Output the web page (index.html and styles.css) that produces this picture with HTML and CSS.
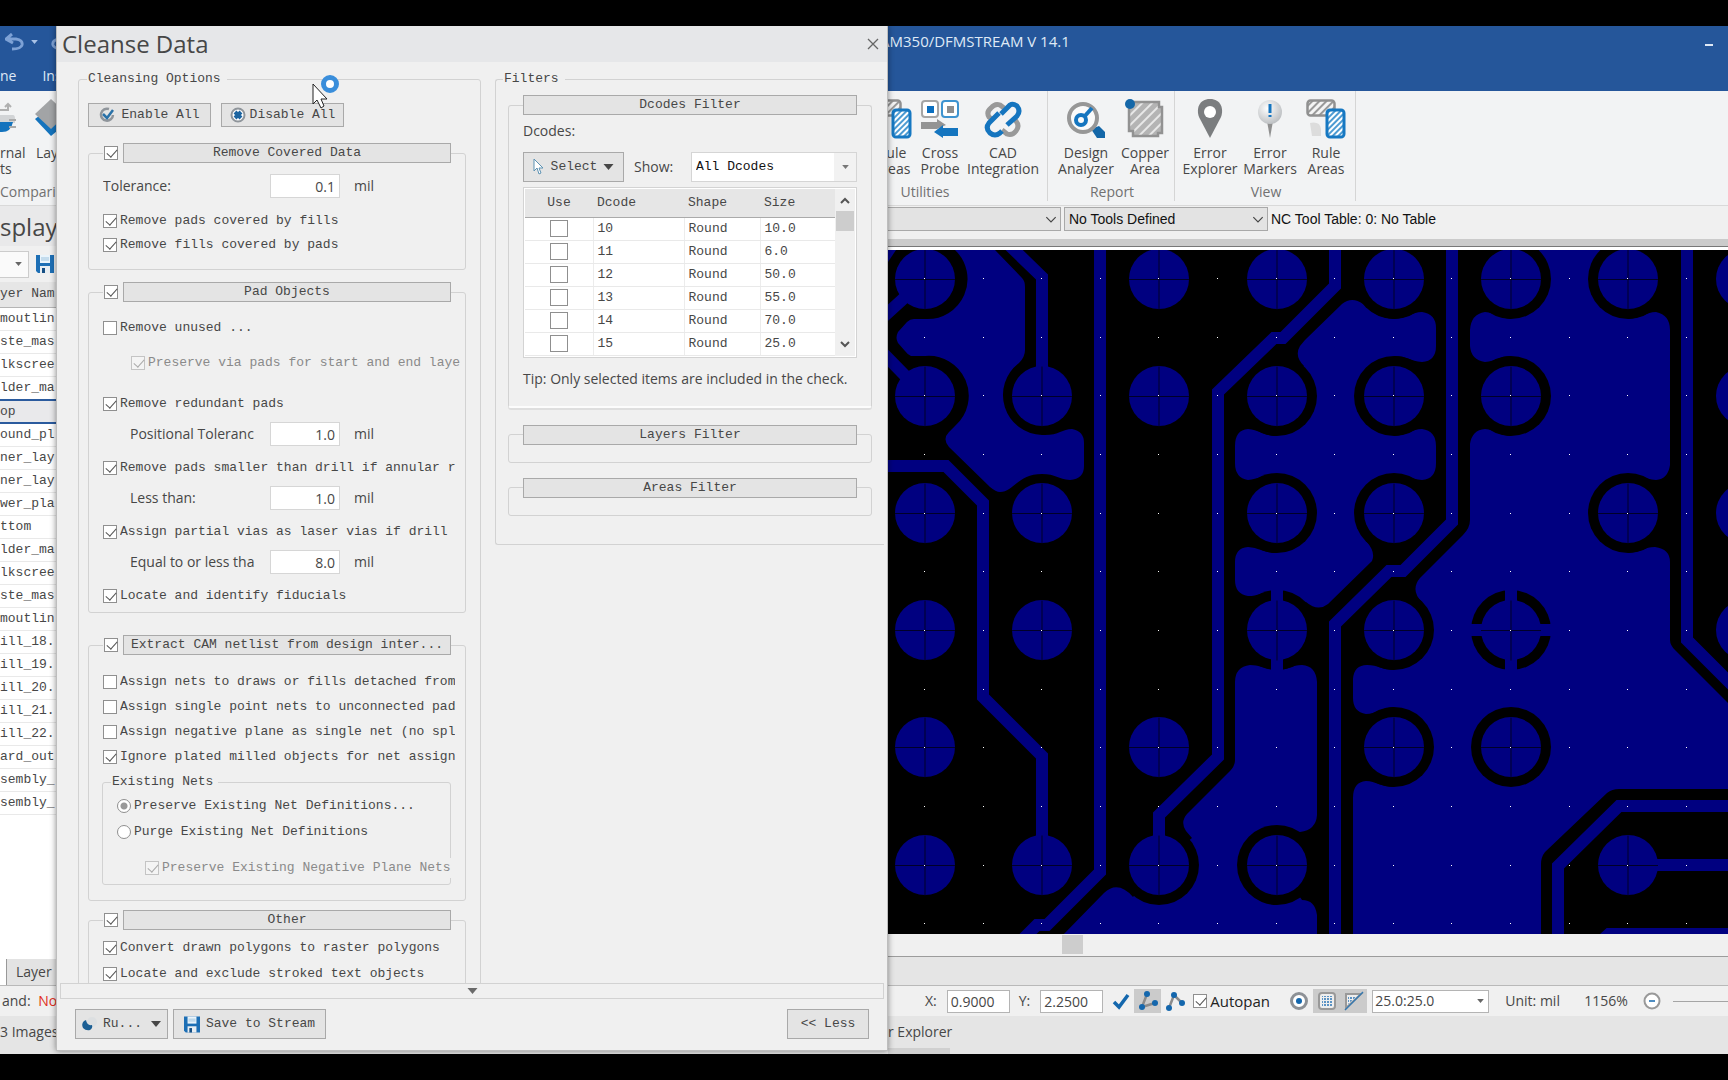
FILE: index.html
```html
<!DOCTYPE html>
<html lang="en">
<head>
<meta charset="utf-8">
<title>CAM350/DFMSTREAM V 14.1</title>
<link rel="stylesheet" href="styles.css">
</head>
<body>
<svg class="defs" aria-hidden="true">
  <defs>
    <pattern id="hatchGray" width="5" height="5" patternUnits="userSpaceOnUse" patternTransform="rotate(45)"><rect width="5" height="5" fill="#f4f4f4"/><rect width="2" height="5" fill="#9a9a9a"/></pattern>
    <pattern id="hatchCopper" width="7" height="7" patternUnits="userSpaceOnUse" patternTransform="rotate(45)"><rect width="7" height="7" fill="#b4b4b4"/><rect width="2" height="7" fill="#e8e8e8"/></pattern>
    <pattern id="hatchBlue" width="4" height="4" patternUnits="userSpaceOnUse" patternTransform="rotate(45)"><rect width="4" height="4" fill="#fff"/><rect width="2" height="4" fill="#4d9bd2"/></pattern>
    <pattern id="dotsBlue" width="3" height="3" patternUnits="userSpaceOnUse"><rect width="2" height="2" fill="#5b93c4"/></pattern>
    <radialGradient id="ball" cx="0.4" cy="0.35" r="0.7"><stop offset="0" stop-color="#fff"/><stop offset="1" stop-color="#b9bcbf"/></radialGradient>
    <symbol id="caret" viewBox="0 0 10 6"><path d="M0 0H10L5 6Z" fill="currentColor"/></symbol>
    <symbol id="chev" viewBox="0 0 10 6"><path d="M1 1L5 5L9 1" fill="none" stroke="currentColor" stroke-width="1"/></symbol>
    <symbol id="disk" viewBox="0 0 18 18"><path d="M0 0H18V18H2L0 16Z" fill="#1d6fb5"/><rect x="4" y="0" width="10" height="8" fill="#eaf4fb"/><path d="M5 3H13M5 5H13" stroke="#9dc3de"/><rect x="4" y="11" width="10" height="7" fill="#e8eef2"/><rect x="6" y="13" width="3" height="5" fill="#174f84"/></symbol>
    <symbol id="rules" viewBox="0 0 40 40"><rect x="1.500" y="1.500" width="27" height="15" rx="3" fill="url(#hatchGray)" stroke="#909090" stroke-width="2.500"/><path d="M4 24Q14 22 15 30V37H6Z" fill="#dcdcdc"/><rect x="21" y="11" width="17" height="27" rx="3" fill="url(#hatchBlue)" stroke="#1678c2" stroke-width="3"/></symbol>
  </defs>
</svg>
<main class="app">
  <header class="titlebar">
    <div class="left-strip">
      <div class="quick">
        <svg width="20" height="18" viewBox="0 0 20 18"><path d="M7 1L1 6L8 10M2 6H11Q18 7 17 12Q16 16 7 16" fill="none" stroke="#7ea2d6" stroke-width="3"/></svg>
        <svg width="7" height="4" class="quick-caret"><use href="#caret"/></svg>
        <svg width="20" height="18" viewBox="0 0 20 18"><path d="M13 1L19 6L12 10M18 6H9Q2 7 3 12Q4 16 13 16" fill="none" stroke="#7ea2d6" stroke-width="3"/></svg>
      </div>
      <nav class="tabs"><a href="#home">ne</a><a href="#insert">Ins</a></nav>
    </div>
    <h1 class="app-title">AM350/DFMSTREAM V 14.1</h1>
    <button class="minimize" aria-label="Minimize"></button>
  </header>

  <section class="ribbon">
    <div class="group compare">
      <div class="tools">
        <button class="tool"><svg width="16" height="40" viewBox="0 0 16 40"><path d="M0 11H8V6M5 8L8 5L11 8" fill="none" stroke="#b0b0b0" stroke-width="2"/><path d="M0 16H13Q15 16 15 20V24H0Z" fill="#d2d4d6"/><path d="M0 23H13Q11 33 2 33H0Z" fill="#1473bd"/><path d="M9 21H16M9 28H16" stroke="#aaa" stroke-width="2"/></svg><span>rnal<br>ts</span></button>
        <button class="tool"><svg width="40" height="40" viewBox="0 0 40 40"><path d="M20 8L38 22L20 37L4 20Z" fill="#1473bd"/><path d="M20 0L36 15L20 30L4 15Z" fill="#a2a4a6"/></svg><span>Laye</span></button>
      </div>
      <div class="caption">Comparis</div>
    </div>
    <div class="group utilities">
      <div class="tools">
        <button class="tool w52"><svg width="40" height="40"><use href="#rules"/></svg><span>Rule<br>Areas</span></button>
        <button class="tool w44"><svg width="40" height="40" viewBox="0 0 40 40"><rect x="2" y="2" width="16" height="16" rx="3" fill="#fff" stroke="#a5a5a5" stroke-width="2"/><rect x="7" y="7" width="7" height="7" fill="#0b6fc0"/><rect x="22" y="2" width="16" height="16" rx="3" fill="#fff" stroke="#3d93d0" stroke-width="2"/><rect x="27" y="7" width="7" height="7" fill="#8e8e8e"/><path d="M1 23H17V20L26 26L17 30H1Z" fill="#949494"/><path d="M38 29H23V26L14 33L23 39V37H38Z" fill="#1575bf"/></svg><span>Cross<br>Probe</span></button>
        <button class="tool w82"><svg width="40" height="40" viewBox="0 0 40 40"><g fill="none" stroke-width="5"><path d="M21 9L17 6Q12 4 8 9Q3 13 6 18L10 21" stroke="#999"/><path d="M19 31L24 35Q29 37 33 32Q37 27 33 22L30 19" stroke="#999"/><path d="M18 15L27 6Q30 4 34 7Q38 12 34 17L24 26" stroke="#1575bf"/><path d="M16 14L6 24Q2 29 7 34Q12 38 17 34L19 32" stroke="#1575bf"/></g></svg><span>CAD<br>Integration</span></button>
      </div>
      <div class="caption">Utilities</div>
    </div>
    <div class="group">
      <div class="tools">
        <button class="tool w66"><svg width="40" height="40" viewBox="0 0 40 40"><path d="M25 30L33 27L39 33V39H31Z" fill="#1467a8"/><circle cx="17" cy="19" r="14" fill="#fafafa" stroke="#979797" stroke-width="4"/><circle cx="15" cy="21" r="5" fill="none" stroke="#1575bf" stroke-width="4"/><path d="M18 18L26 9" stroke="#1575bf" stroke-width="4"/></svg><span>Design<br>Analyzer</span></button>
        <button class="tool w52"><svg width="40" height="40" viewBox="0 0 40 40"><path d="M6 3H34V8H37V34H33V37H8V32H4V8H6Z" fill="url(#hatchCopper)" stroke="#929292" stroke-width="2.500"/><circle cx="5" cy="5" r="5" fill="#1467a8"/></svg><span>Copper<br>Area</span></button>
      </div>
      <div class="caption">Report</div>
    </div>
    <div class="group">
      <div class="tools">
        <button class="tool w60"><svg width="40" height="40" viewBox="0 0 40 40"><path d="M20 0C9 0 6 10 9 18L20 39L31 18C34 10 31 0 20 0Z" fill="#7b7d7f"/><circle cx="20" cy="13" r="6" fill="#fff"/></svg><span>Error<br>Explorer</span></button>
        <button class="tool w60"><svg width="40" height="40" viewBox="0 0 40 40"><path d="M17 22H23L20 39Z" fill="#909090"/><circle cx="20" cy="13" r="12" fill="url(#ball)"/><path d="M20 5V14M20 16V18" stroke="#1575bf" stroke-width="3"/></svg><span>Error<br>Markers</span></button>
        <button class="tool w52"><svg width="40" height="40"><use href="#rules"/></svg><span>Rule<br>Areas</span></button>
      </div>
      <div class="caption">View</div>
    </div>
  </section>

  <section class="workspace">
    <aside class="layers">
      <h2>splay</h2>
      <div class="layer-tools"><span class="combo-end"><svg width="7" height="4"><use href="#caret"/></svg></span><button class="flat" aria-label="Save"><svg width="18" height="20"><use href="#disk"/></svg></button></div>
      <table class="layer-table">
        <thead><tr><th>yer Nam</th></tr></thead>
        <tbody>
          <tr><td>moutlin</td></tr><tr><td>ste_mas</td></tr><tr><td>lkscree</td></tr><tr><td>lder_ma</td></tr>
          <tr class="current"><td>op</td></tr><tr><td>ound_pl</td></tr><tr><td>ner_lay</td></tr><tr><td>ner_lay</td></tr>
          <tr><td>wer_pla</td></tr><tr><td>ttom</td></tr><tr><td>lder_ma</td></tr><tr><td>lkscree</td></tr>
          <tr><td>ste_mas</td></tr><tr><td>moutlin</td></tr><tr><td>ill_18.</td></tr><tr><td>ill_19.</td></tr>
          <tr><td>ill_20.</td></tr><tr><td>ill_21.</td></tr><tr><td>ill_22.</td></tr><tr><td>ard_out</td></tr>
          <tr><td>sembly_</td></tr><tr><td>sembly_</td></tr>
        </tbody>
      </table>
      <div class="panel-tabs"><button>Layer</button></div>
    </aside>
    <div class="view">
      <div class="toolbar">
        <span class="native blank"><select aria-label="Layer"><option></option></select><svg width="12" height="7"><use href="#chev"/></svg></span>
        <span class="native"><select aria-label="Tool"><option>No Tools Defined</option></select><svg width="12" height="7"><use href="#chev"/></svg></span>
        <span class="nc">NC Tool Table: 0: No Table</span>
      </div>
      <div class="band"></div>
      <svg class="board" viewBox="300 250 1428 684" preserveAspectRatio="xMinYMin slice" role="img" aria-label="Board layout">
        <rect x="300" y="250" width="1428" height="684" fill="#000"/>
        <g fill="#000080">
          <path d="M880 250H896L888 262H880Z"/>
          <path d="M955 250H995L1022 278Q1025 281 1025 287V350Q1025 357 1019 363A40 40 0 0 0 1042 435C1058 436 1062 429 1072 429Q1084 431 1084 443V466Q1084 479 1070 480C1058 479 1056 474 1042 474C1018 474 1013 492 1000 492Q996 492 990 487L949 447Q942 439 949 432L955 426A40 40 0 0 0 925 356H911Q908 355 905 351L898 343Q895 338 898 332L907 322Q910 319 914 319H925A40 40 0 0 0 955 250Z"/>
          <path d="M1305 340L1342 304Q1352 296 1363 304C1372 312 1380 318 1394 319C1408 318 1412 312 1422 312Q1436 314 1436 328V346Q1436 361 1422 362C1410 361 1408 356 1394 356V436C1408 435 1412 429 1422 429Q1436 431 1436 446V463Q1436 479 1422 480C1410 479 1408 474 1394 474V513L1366 541Q1376 552 1372 561L1328 604Q1318 612 1306 602L1277 610V591C1262 591 1260 596 1248 596Q1235 594 1235 580V562Q1235 548 1248 547C1260 548 1264 553 1277 553V474C1264 474 1260 479 1248 480Q1235 478 1235 463V446Q1235 430 1248 429C1260 430 1264 436 1277 436V396L1304 366Q1294 356 1300 346Z"/>
          <path d="M1277 670C1264 669 1260 665 1250 665Q1235 667 1235 682V760Q1235 766 1230 771L1187 814Q1180 822 1186 831L1192 838L1159 865L1133 897Q1118 880 1104 893L1062 936H1317V915Q1315 900 1302 900L1277 865L1300 832Q1316 830 1317 815V682Q1316 666 1302 665C1292 665 1288 670 1277 670Z"/>
          <path d="M1511 250H1628V319C1642 318 1646 312 1656 312Q1670 315 1670 330V465Q1668 479 1656 480C1644 479 1640 474 1628 474V553C1642 552 1644 547 1655 547Q1670 549 1670 562V640Q1670 645 1675 650L1728 703V789H1619Q1612 789 1607 793L1545 852Q1541 857 1541 864V936H1353V798Q1353 782 1366 781C1376 781 1380 787 1394 787V707C1380 708 1376 714 1366 714Q1353 712 1353 698V679Q1354 665 1367 665C1378 665 1382 670 1394 670V630L1422 602Q1410 590 1420 578L1463 535Q1470 528 1470 520V444Q1472 430 1485 429C1496 430 1500 436 1511 436V356C1500 356 1496 361 1485 362Q1471 360 1470 346V330Q1471 314 1485 312C1496 313 1500 318 1511 319Z"/>
        </g>
        <g fill="#000">
          <circle cx="1394" cy="279" r="40"/><circle cx="1511" cy="279" r="40"/><circle cx="1628" cy="279" r="40"/>
          <circle cx="1277" cy="396" r="40"/><circle cx="1394" cy="396" r="40"/><circle cx="1511" cy="396" r="40"/>
          <circle cx="1277" cy="513" r="40"/><circle cx="1394" cy="513" r="40"/><circle cx="1628" cy="513" r="40"/>
          <circle cx="1277" cy="630" r="40"/><circle cx="1394" cy="630" r="40"/><circle cx="1511" cy="630" r="40"/>
          <circle cx="1394" cy="747" r="40"/><circle cx="1511" cy="747" r="40"/>
          <circle cx="1159" cy="865" r="40"/><circle cx="1277" cy="865" r="40"/>
        </g>
        <g fill="none" stroke="#000080" stroke-width="12">
          <path d="M1008 244L1042 277V396"/>
          <path d="M1100 250V872L1047 925H1037L1020 942"/>
          <path d="M1335 250V286L1283 338H1274L1218 392V757L1159 815V865"/>
          <path d="M1452 250V522L1403 571H1389L1335 624V936"/>
          <path d="M1687 250V640L1732 685"/>
          <path d="M880 466H946L983 503V697L1042 756V865"/>
          <path d="M1732 806H1619L1558 866V936"/>
          <path d="M1628 865H1732"/>
          <path d="M1598 944L1609 934H1732"/>
          <path d="M880 320L925 279M880 350L925 396"/>
          <path d="M1277 588V672M1511 588V672M1469 630H1553"/>
        </g>
        <g fill="#000080">
          <circle cx="925" cy="279" r="30"/><circle cx="1159" cy="279" r="30"/><circle cx="1277" cy="279" r="30"/><circle cx="1394" cy="279" r="30"/><circle cx="1511" cy="279" r="30"/><circle cx="1628" cy="279" r="30"/><circle cx="1746" cy="279" r="30"/>
          <circle cx="925" cy="396" r="30"/><circle cx="1042" cy="396" r="30"/><circle cx="1159" cy="396" r="30"/><circle cx="1277" cy="396" r="30"/><circle cx="1394" cy="396" r="30"/><circle cx="1511" cy="396" r="30"/><circle cx="1746" cy="396" r="30"/>
          <circle cx="925" cy="513" r="30"/><circle cx="1042" cy="513" r="30"/><circle cx="1277" cy="513" r="30"/><circle cx="1394" cy="513" r="30"/><circle cx="1628" cy="513" r="30"/><circle cx="1746" cy="513" r="30"/>
          <circle cx="925" cy="630" r="30"/><circle cx="1042" cy="630" r="30"/><circle cx="1277" cy="630" r="30"/><circle cx="1394" cy="630" r="30"/><circle cx="1511" cy="630" r="30"/><circle cx="1746" cy="630" r="30"/>
          <circle cx="925" cy="747" r="30"/><circle cx="1159" cy="747" r="30"/><circle cx="1394" cy="747" r="30"/><circle cx="1511" cy="747" r="30"/>
          <circle cx="925" cy="865" r="30"/><circle cx="1042" cy="865" r="30"/><circle cx="1159" cy="865" r="30"/><circle cx="1277" cy="865" r="30"/><circle cx="1628" cy="865" r="30"/>
        </g>
        <path class="cross" d="M895 279.500h60m-30-30v60M1129 279.500h60m-30-30v60M1247 279.500h60m-30-30v60M1364 279.500h60m-30-30v60M1481 279.500h60m-30-30v60M1598 279.500h60m-30-30v60M895 396.500h60m-30-30v60M1012 396.500h60m-30-30v60M1129 396.500h60m-30-30v60M1247 396.500h60m-30-30v60M1364 396.500h60m-30-30v60M1481 396.500h60m-30-30v60M895 513.500h60m-30-30v60M1012 513.500h60m-30-30v60M1247 513.500h60m-30-30v60M1364 513.500h60m-30-30v60M1598 513.500h60m-30-30v60M895 630.500h60m-30-30v60M1012 630.500h60m-30-30v60M1247 630.500h60m-30-30v60M1364 630.500h60m-30-30v60M1481 630.500h60m-30-30v60M895 747.500h60m-30-30v60M1129 747.500h60m-30-30v60M1364 747.500h60m-30-30v60M1481 747.500h60m-30-30v60M895 865.500h60m-30-30v60M1012 865.500h60m-30-30v60M1129 865.500h60m-30-30v60M1247 865.500h60m-30-30v60M1598 865.500h60m-30-30v60"/>
        <path class="dots" d="M924 278.500H1728M924 337.500H1728M924 395.500H1728M924 454.500H1728M924 513.500H1728M924 571.500H1728M924 630.500H1728M924 689.500H1728M924 747.500H1728M924 806.500H1728M924 865.500H1728M924 923.500H1728"/>
      </svg>
      <div class="hscroll"><div class="thumb"></div></div>
      <div class="foot-strip"></div>
    </div>
  </section>

  <section class="command">
    <div class="cmd-left">and: <span class="alert">No</span></div>
    <label class="coord">X: <input type="text" value="0.9000"></label>
    <label class="coord last">Y: <input type="text" value="2.2500"></label>
    <button class="icon-btn" aria-label="Apply"><svg width="18" height="18" viewBox="0 0 18 18"><path d="M2 10L7 15L16 3" fill="none" stroke="#1467ad" stroke-width="3.500"/></svg></button>
    <button class="icon-btn on" aria-label="Snap ends"><svg width="20" height="20" viewBox="0 0 20 20"><path d="M9 3L4 16L17 12" fill="none" stroke="#8b8b8b" stroke-width="2.500"/><g fill="#1467ad"><circle cx="9" cy="3" r="3"/><circle cx="4" cy="16" r="3"/><circle cx="17" cy="12" r="3"/></g></svg></button>
    <button class="icon-btn" aria-label="Snap corner"><svg width="20" height="20" viewBox="0 0 20 20"><path d="M4 17L9 4L17 12" fill="none" stroke="#8b8b8b" stroke-width="2.500"/><g fill="#1467ad"><circle cx="4" cy="17" r="3"/><circle cx="9" cy="4" r="3"/><circle cx="17" cy="12" r="3"/></g></svg></button>
    <label class="check autopan"><input type="checkbox" checked><span>Autopan</span></label>
    <button class="icon-btn target" aria-label="Origin"><svg width="20" height="20" viewBox="0 0 20 20"><circle cx="10" cy="10" r="7.500" fill="#fff" stroke="#8d9196" stroke-width="3"/><circle cx="10" cy="10" r="3" fill="#1467ad"/></svg></button>
    <button class="icon-btn on" aria-label="Grid"><svg width="18" height="18" viewBox="0 0 18 18"><rect x="1" y="1" width="16" height="16" rx="3" fill="#eee" stroke="#999" stroke-width="2"/><rect x="4" y="4" width="11" height="11" fill="url(#dotsBlue)"/></svg></button>
    <button class="icon-btn on" aria-label="Grid snap"><svg width="20" height="20" viewBox="0 0 20 20"><path d="M2 17V3H17Z" fill="#eee" stroke="#999" stroke-width="2"/><path d="M4 13V5H13Z" fill="url(#dotsBlue)"/><path d="M1 19L19 1" stroke="#3578b0" stroke-width="1.500"/></svg></button>
    <span class="grid-select"><select aria-label="Grid size"><option>25.0:25.0</option></select><svg width="7" height="4"><use href="#caret"/></svg></span>
    <span class="unit">Unit: mil</span><span class="pct">1156%</span>
    <button class="icon-btn" aria-label="Zoom out"><svg width="18" height="18" viewBox="0 0 18 18"><circle cx="9" cy="9" r="7.500" fill="#fff" stroke="#999" stroke-width="2"/><path d="M6 9H12" stroke="#1467ad" stroke-width="1.500"/></svg></button>
    <span class="slider-line"></span>
  </section>
  <footer class="status"><span class="images">3 Images</span><span class="explorer">r Explorer</span></footer>

  <section class="dialog" role="dialog" aria-labelledby="dlg-title">
    <header class="dlg-head"><h2 id="dlg-title">Cleanse Data</h2><button class="flat" aria-label="Close"><svg width="12" height="12" viewBox="0 0 12 12"><path d="M1 1L11 11M11 1L1 11" stroke="#666" stroke-width="1.300"/></svg></button></header>
    <div class="dlg-body">
      <fieldset class="options">
        <legend>Cleansing Options</legend>
        <div class="toggles">
          <button class="btn"><svg width="16" height="16" viewBox="0 0 16 16"><path d="M14 8A6 6 0 1 1 10 2" fill="none" stroke="#8f959b" stroke-width="2.500"/><path d="M4 7L8 11L14 3" fill="none" stroke="#2a72a8" stroke-width="2.500"/></svg>Enable All</button>
          <button class="btn"><svg width="16" height="16" viewBox="0 0 16 16"><circle cx="8" cy="8" r="6.500" fill="#fff" stroke="#8f959b" stroke-width="2"/><path d="M5 5L11 11M11 5L5 11" stroke="#1c64a0" stroke-width="4"/></svg>Disable All</button>
        </div>

        <fieldset class="box g1">
          <legend><input type="checkbox" checked aria-label="Remove Covered Data"><button class="btn bar">Remove Covered Data</button></legend>
          <div class="field flush"><label for="tol">Tolerance:</label><input id="tol" type="text" value="0.1"><span>mil</span></div>
          <label class="check r24"><input type="checkbox" checked><span>Remove pads covered by fills</span></label>
          <label class="check r24"><input type="checkbox" checked><span>Remove fills covered by pads</span></label>
        </fieldset>

        <fieldset class="box g2">
          <legend><input type="checkbox" checked aria-label="Pad Objects"><button class="btn bar">Pad Objects</button></legend>
          <label class="check r34"><input type="checkbox"><span>Remove unused ...</span></label>
          <label class="check r34 sub via"><input type="checkbox" checked disabled><span>Preserve via pads for start and end laye</span></label>
          <label class="check r34 after"><input type="checkbox" checked><span>Remove redundant pads</span></label>
          <div class="field"><label for="pos">Positional Toleranc</label><input id="pos" type="text" value="1.0"><span>mil</span></div>
          <label class="check r34"><input type="checkbox" checked><span>Remove pads smaller than drill if annular r</span></label>
          <div class="field"><label for="less">Less than:</label><input id="less" type="text" value="1.0"><span>mil</span></div>
          <label class="check r34"><input type="checkbox" checked><span>Assign partial vias as laser vias if drill</span></label>
          <div class="field"><label for="eq">Equal to or less tha</label><input id="eq" type="text" value="8.0"><span>mil</span></div>
          <label class="check r34"><input type="checkbox" checked><span>Locate and identify fiducials</span></label>
        </fieldset>

        <fieldset class="box g3">
          <legend><input type="checkbox" checked aria-label="Extract CAM netlist"><button class="btn bar">Extract CAM netlist from design inter...</button></legend>
          <label class="check r25"><input type="checkbox"><span>Assign nets to draws or fills detached from</span></label>
          <label class="check r25"><input type="checkbox"><span>Assign single point nets to unconnected pad</span></label>
          <label class="check r25"><input type="checkbox"><span>Assign negative plane as single net (no spl</span></label>
          <label class="check r25"><input type="checkbox" checked><span>Ignore plated milled objects for net assign</span></label>
          <fieldset class="nets">
            <legend>Existing Nets</legend>
            <label class="check r26"><input type="radio" name="nets" checked><span>Preserve Existing Net Definitions...</span></label>
            <label class="check r26"><input type="radio" name="nets"><span>Purge Existing Net Definitions</span></label>
            <label class="check r34 sub"><input type="checkbox" checked disabled><span>Preserve Existing Negative Plane Nets</span></label>
          </fieldset>
        </fieldset>

        <fieldset class="box g4">
          <legend><input type="checkbox" checked aria-label="Other"><button class="btn bar">Other</button></legend>
          <label class="check r26"><input type="checkbox" checked><span>Convert drawn polygons to raster polygons</span></label>
          <label class="check r26"><input type="checkbox" checked><span>Locate and exclude stroked text objects</span></label>
        </fieldset>
      </fieldset>

      <fieldset class="filters">
        <legend>Filters</legend>
        <fieldset class="box filter dcodes">
          <legend><button class="btn bar">Dcodes Filter</button></legend>
          <div class="label">Dcodes:</div>
          <div class="pick">
            <button class="btn select-btn"><svg width="12" height="18" viewBox="0 0 12 18"><path d="M1 1V13L4 10L6 16L8 15L6 10H10Z" fill="#fff" stroke="#5d92b3"/></svg>Select<svg width="11" height="6"><use href="#caret"/></svg></button>
            <label for="show">Show:</label>
            <span class="combo"><select id="show"><option>All Dcodes</option></select><i><svg width="7" height="4"><use href="#caret"/></svg></i></span>
          </div>
          <div class="grid">
            <table>
              <colgroup><col class="c1"><col class="c2"><col class="c3"><col></colgroup>
              <thead><tr><th>Use</th><th>Dcode</th><th>Shape</th><th>Size</th></tr></thead>
              <tbody>
                <tr><td><input type="checkbox" aria-label="Use 10"></td><td>10</td><td>Round</td><td>10.0</td></tr>
                <tr><td><input type="checkbox" aria-label="Use 11"></td><td>11</td><td>Round</td><td>6.0</td></tr>
                <tr><td><input type="checkbox" aria-label="Use 12"></td><td>12</td><td>Round</td><td>50.0</td></tr>
                <tr><td><input type="checkbox" aria-label="Use 13"></td><td>13</td><td>Round</td><td>55.0</td></tr>
                <tr><td><input type="checkbox" aria-label="Use 14"></td><td>14</td><td>Round</td><td>70.0</td></tr>
                <tr><td><input type="checkbox" aria-label="Use 15"></td><td>15</td><td>Round</td><td>25.0</td></tr>
              </tbody>
            </table>
            <div class="vscroll"><svg width="10" height="8" viewBox="0 0 10 8"><path d="M1 6L5 2L9 6" fill="none" stroke="#555" stroke-width="2"/></svg><div class="vthumb"></div><svg class="down" width="10" height="8" viewBox="0 0 10 8"><path d="M1 2L5 6L9 2" fill="none" stroke="#555" stroke-width="2"/></svg></div>
          </div>
          <div class="label tip">Tip: Only selected items are included in the check.</div>
        </fieldset>
        <fieldset class="box filter"><legend><button class="btn bar">Layers Filter</button></legend></fieldset>
        <fieldset class="box filter"><legend><button class="btn bar">Areas Filter</button></legend></fieldset>
      </fieldset>
    </div>
    <div class="splitter"><svg width="11" height="6"><use href="#caret"/></svg></div>
    <footer class="dlg-foot">
      <button class="btn run"><svg width="16" height="16" viewBox="0 0 16 16"><circle cx="11" cy="6" r="5" fill="#dcdfe1"/><path d="M3 5Q0 8 2 12Q5 15 9 14Q12 12 11 9Q6 10 5 4Z" fill="#1b5f94"/></svg>Ru...<svg width="12" height="6"><use href="#caret"/></svg></button>
      <button class="btn save"><svg width="16" height="17"><use href="#disk"/></svg>Save to Stream</button>
      <button class="btn less">&lt;&lt; Less</button>
    </footer>
  </section>
  <svg class="cursor" width="32" height="38" viewBox="0 0 32 38"><circle cx="18" cy="9" r="6.500" fill="#fff" stroke="#3a8edb" stroke-width="5"/><path d="M1 9V29L5 25L9 33L12 31L9 24H15Z" fill="#fff" stroke="#222"/></svg>
</main>
</body>
</html>
```
FILE: styles.css
```css
* { box-sizing: border-box; }
html { background: #000; }
body { margin: 0; padding: 26px 0; background: #000; color: #474747; font: 14px/18px "Open Sans", "Noto Sans", sans-serif; overflow-x: hidden; }
button, input, select { font: inherit; color: inherit; }
button { padding: 0; border: 0; background: none; white-space: nowrap; }
fieldset { margin: 0; padding: 0; min-width: 0; border: 1px solid #d2d2d2; border-radius: 3px; }
legend { padding: 0; }
h1, h2 { margin: 0; font-weight: 400; }
svg { flex: none; display: block; }
.defs { position: absolute; width: 0; height: 0; }
.app { position: relative; display: flex; flex-direction: column; min-height: calc(100vh - 52px); background: #f0f0f0; overflow: hidden; }

/* Title bar */
.titlebar { display: flex; height: 65px; background: #25569a; color: #dfe9f6; }
.left-strip { flex: none; width: 880px; overflow: hidden; }
.quick { display: flex; align-items: center; gap: 6px; height: 32px; padding: 0 5px; color: #a9c2e6; overflow: hidden; }
.quick-caret { margin-right: 6px; }
.tabs { display: flex; gap: 26px; padding-top: 9px; }
.tabs a { color: inherit; text-decoration: none; }
.app-title { font-size: 15px; line-height: 31px; }
.minimize { width: 8px; height: 2px; margin: 18px 15px 0 auto; background: #dfe9f6; }

/* Ribbon */
.ribbon { display: flex; height: 115px; background: #f2f3f4; border-bottom: 1px solid #d9d9d9; }
.group { display: flex; flex-direction: column; padding: 8px 3px 0 5px; border-right: 1px solid #d5d5d5; margin-bottom: 4px; }
.tools { display: flex; align-items: flex-start; flex: 1; }
.compare { width: 801px; border: 0; padding-left: 0; }
.compare .caption { text-align: left; }
.compare .tool { width: 42px; text-align: left; }
.compare .tool:first-child { width: 30px; align-items: flex-start; }
.utilities { width: 247px; }
.utilities .tools { justify-content: flex-end; }
.tool { display: flex; flex: none; flex-direction: column; align-items: center; gap: 6px; line-height: 16px; }
.tool span { white-space: nowrap; }
.w44 { width: 44px; } .w52 { width: 52px; } .w60 { width: 60px; } .w66 { width: 66px; } .w82 { width: 82px; }
.caption { height: 18px; text-align: center; color: #717171; }

/* Layer panel */
.workspace { display: flex; flex: 1; }
.layers { display: flex; flex-direction: column; flex: none; width: 300px; background: #fff; }
.layers h2 { height: 40px; background: #e9e9ea; font-size: 24px; line-height: 42px; }
.layer-tools { display: flex; gap: 7px; align-items: center; height: 36px; background: #f0f0f0; }
.combo-end { display: flex; align-items: center; justify-content: flex-end; width: 29px; height: 27px; padding-right: 6px; background: #fafafa; border: 1px solid #ccc; border-left: 0; color: #666; }
.layer-table, .grid table { border-collapse: collapse; table-layout: fixed; width: 100%; }
.layer-table { font: 13px/22px "Liberation Mono", monospace; }
.layer-table th { height: 25px; padding: 0; background: #e6e6e6; border-bottom: 1px solid #b5b5b5; font-weight: 400; text-align: left; }
.layer-table td { height: 23px; padding: 0; border-bottom: 1px solid #e9e9e9; }
.current td { background: #e9e9eb; border-top: 2px solid #2b5b9e; border-bottom: 2px solid #2b5b9e; line-height: 19px; }
.panel-tabs { display: flex; margin-top: auto; padding-left: 6px; height: 26px; background: #fff; }
.panel-tabs button { flex: 1; padding-left: 9px; background: #e3e3e3; border-left: 1px solid #999; text-align: left; }

/* Board view */
.view { display: flex; flex-direction: column; flex: 1; min-width: 0; }
.toolbar { display: flex; align-items: center; gap: 3px; height: 33px; padding-bottom: 7px; color: #111; font: 14px/18px "Liberation Sans", Arial, sans-serif; }
.native { position: relative; width: 204px; height: 24px; }
.native.blank { width: 761px; }
.native select { width: 100%; height: 100%; padding: 0 4px; appearance: none; border: 1px solid #a9a9a9; border-radius: 0; background: #e3e3e3; }
.native svg { position: absolute; right: 4px; top: 9px; color: #444; pointer-events: none; }
.band { height: 11px; background: #cbcbcb; border-bottom: 3px solid #fff; box-shadow: inset 0 -1px #777; }
.board { flex: 1 1 0; width: 100%; min-height: 0; }
.cross { fill: none; stroke: #000028; stroke-width: 1; }
.dots { fill: none; stroke: #fff; stroke-width: 1; stroke-dasharray: 1 57.600; shape-rendering: crispEdges; }
.hscroll { height: 22px; padding: 1px 0 2px 762px; }
.thumb { width: 21px; height: 19px; background: #cdcdcd; }
.foot-strip { height: 29px; background: #e5e5e5; border-top: 1px solid #9c9c9c; }

/* Command and status bars */
.command { display: flex; align-items: center; height: 31px; border-top: 1px solid #b9b9b9; }
.cmd-left { width: 925px; padding-left: 2px; white-space: pre; }
.alert { color: #e03020; margin-left: 4px; }
.coord { display: flex; align-items: center; gap: 10px; margin-right: 9px; }
.coord.last { margin-right: 4px; }
.coord input { width: 63px; height: 23px; padding: 0 3px; border: 1px solid #b4b4b4; background: #fff; }
.icon-btn { display: flex; align-items: center; justify-content: center; flex: none; width: 27px; height: 24px; }
.icon-btn.on { background: #cbcbcb; }
.autopan { width: 98px; margin-left: 5px; gap: 5px; color: #222; font-size: 15px; }
.target { margin-right: 1px; margin-left: -6px; }
.grid-select { position: relative; width: 117px; height: 23px; margin-left: 5px; }
.grid-select select { width: 100%; height: 100%; padding: 0 2px; appearance: none; border: 1px solid #b4b4b4; border-radius: 0; background: #fff; }
.grid-select svg { position: absolute; right: 5px; top: 9px; color: #666; }
.unit { margin-left: 16px; width: 79px; }
.pct { width: 54px; }
.slider-line { flex: 1; height: 1px; margin-left: 8px; background: #a5a5a5; }
.status { display: flex; height: 38px; background: #e5e5e5; line-height: 31px; }
.images { width: 888px; }
.explorer { width: 62px; border-bottom: 6px solid #d0d0d0; white-space: nowrap; }

/* Cleanse Data dialog */
.dialog { position: absolute; left: 56px; top: 0; bottom: 3px; width: 832px; display: flex; flex-direction: column; padding: 0 3px; background: #f0f0f0; border: 1px solid #bdbdbd; border-top: 0; box-shadow: 0 0 6px rgba(0,0,0,.45); font: 13px/16px "Liberation Mono", monospace; }
.dlg-head { display: flex; align-items: center; justify-content: space-between; height: 36px; margin: 0 -3px; padding: 0 8px 0 5px; background: #e6e7e9; }
.dlg-head h2 { font: 24px/36px "Open Sans", "Noto Sans", sans-serif; }
.dlg-body { display: flex; gap: 14px; align-items: flex-start; flex: 1 1 0; min-height: 0; padding: 9px 0 0 18px; overflow: hidden; }
.options { width: 403px; padding: 0 14px 20px 9px; }
.options > legend, .filters > legend { margin-left: -1px; padding: 0 6px 0 1px; }
.filters > legend { margin-left: -5px; }
.toggles { display: flex; gap: 10px; margin-top: 16px; }
.btn { display: flex; align-items: center; justify-content: center; gap: 6px; height: 24px; border: 1px solid #a9a9a9; background: #e4e4e4; font: 13px/16px "Liberation Mono", monospace; }
.toggles .btn { width: 123px; }
.toggles .btn + .btn { gap: 4px; }
.btn.bar { flex: 1; height: 20px; }
input[type="checkbox"], input[type="radio"] { flex: none; appearance: none; width: 14px; height: 14px; margin: 0; border: 1px solid #8f8f8f; background: #fff; }
input[type="checkbox"]:checked::after { content: ""; display: block; width: 9px; height: 5px; margin: 2px 0 0 2px; border: solid #555; border-width: 0 0 1px 1px; transform: rotate(-48deg); }
input[type="checkbox"]:disabled { border-color: #c4c4c4; background: #f4f4f4; }
input[type="checkbox"]:disabled::after { border-color: #aaa; }
input[type="radio"] { border-radius: 50%; }
input[type="radio"]:checked { background: radial-gradient(circle, #999 0 3px, #fff 4px); }
.box { padding: 0 0 0 14px; }
.box > legend { display: flex; align-items: center; gap: 5px; width: calc(100% - 14px); padding-left: 1px; }
.check { display: flex; align-items: center; gap: 3px; }
.check span { white-space: nowrap; overflow: hidden; }
.options .check { margin-right: -1px; }
.options .check span { background: #f0f0f0; line-height: 20px; }
.r24 { height: 24px; } .r25 { height: 25px; } .r26 { height: 26px; } .r34 { height: 34px; padding-top: 4px; }
.sub { padding-left: 28px; color: #8a8a8a; }
.via { margin-top: 1px; }
.after { margin-top: 7px; }
.field { display: flex; align-items: center; height: 30px; padding-left: 27px; font: 14px/18px "Open Sans", "Noto Sans", sans-serif; }
.field label { width: 126px; margin-right: 14px; white-space: nowrap; overflow: hidden; }
.field input { width: 70px; height: 24px; padding: 0 4px; border: 1px solid #d6d6d6; background: #fff; text-align: right; }
.field span { margin-left: 14px; }
.field.flush { padding-left: 0; }
.field.flush label { width: 153px; }
.g1 { margin-top: 16px; padding-bottom: 12px; }
.g1 .field { margin: 8px 0 8px; }
.g2 { margin-top: 12px; padding-bottom: 1px; }
.g2 > legend + .check { margin-top: 7px; }
.g3 { margin-top: 22px; padding-bottom: 15px; }
.g3 > legend + .check { margin-top: 14px; }
.nets { margin: 5px 14px 0 -1px; padding-left: 14px; }
.nets > legend { margin-left: -6px; padding: 0 5px 0 1px; }
.nets > legend + .check { margin-top: 3px; }
.nets .check { margin-right: -14px; }
.nets .r34 { margin-top: 3px; height: 36px; }
.g4 { margin-top: 9px; }
.g4 > legend + .check { margin-top: 5px; }

.filters { flex: 1; min-width: 0; height: 474px; margin-right: -3px; padding: 0 15px 0 12px; border-right: 0; border-radius: 3px 0 0 3px; }
.filter { padding-right: 14px; padding-bottom: 17px; margin-bottom: 15px; }
.filter > legend { width: 100%; padding: 0; }
.dcodes { margin-top: 8px; padding-bottom: 18px; border-bottom: 2px solid #fcfcfc; box-shadow: 0 2px #dedede; margin-bottom: 17px; }
.label, .pick label { font: 14px/18px "Open Sans", "Noto Sans", sans-serif; }
.dcodes .label { margin-top: 7px; }
.pick { display: flex; align-items: center; gap: 10px; margin: 12px 0 5px; }
.select-btn { width: 101px; height: 30px; gap: 6px; }
.pick label { width: 47px; }
.combo { display: flex; flex: 1; height: 30px; background: #fff; border: 1px solid #d5d5d5; }
.combo select { flex: 1; min-width: 0; border: 0; padding: 0 4px; appearance: none; background: none; color: #111; }
.combo i { display: flex; align-items: center; justify-content: center; width: 22px; background: #f2f2f2; color: #777; }
.grid { display: flex; border: 1px solid #d3d3d3; padding: 1px; background: #fff; }
.grid table { width: auto; flex: 1; }
.grid th { height: 28px; padding: 0 4px; background: #e6e6e6; border-bottom: 1px solid #aaa; font-weight: 400; text-align: left; }
.grid td { height: 23px; padding: 0 4px; border-bottom: 1px solid #e9e9e9; border-left: 1px solid #ececec; }
.grid th:first-child, .grid td:first-child { padding: 0; text-align: center; border-left: 0; }
.grid td input { display: block; width: 18px; height: 17px; margin: auto; }
.c1 { width: 68px; } .c2 { width: 91px; } .c3 { width: 76px; }
.vscroll { display: flex; flex-direction: column; align-items: center; width: 20px; padding: 8px 0; background: #f0f0f0; }
.vthumb { width: 18px; height: 20px; margin-top: 6px; background: #cdcdcd; }
.down { margin-top: auto; }
.dcodes .tip { margin-top: 12px; white-space: nowrap; }

.splitter { display: flex; align-items: center; justify-content: center; height: 16px; border: 1px solid #d2d2d2; color: #6a6a6a; }
.dlg-foot { display: flex; gap: 5px; height: 51px; padding: 10px 15px 0 15px; }
.dlg-foot .btn { height: 30px; }
.run { width: 93px; } .run svg:last-child { margin-left: 2px; } .save { width: 153px; } .less { width: 82px; margin-left: auto; }

.cursor { position: absolute; left: 312px; top: 49px; pointer-events: none; }
```
